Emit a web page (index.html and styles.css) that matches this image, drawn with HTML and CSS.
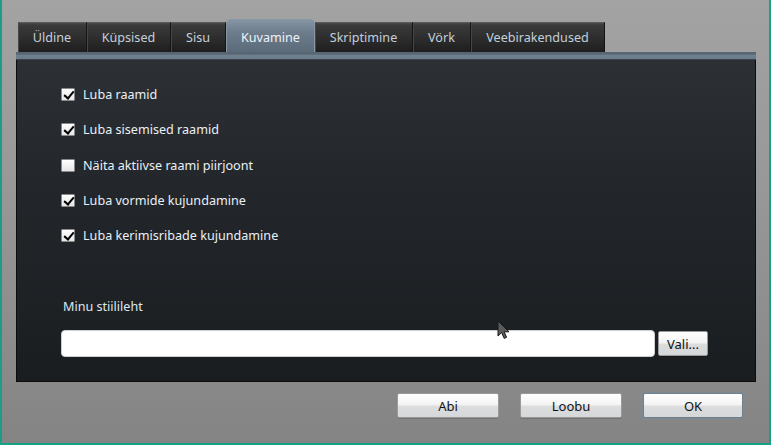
FILE: index.html
```html
<!DOCTYPE html>
<html lang="et">
<head>
<meta charset="utf-8">
<title>Kuvamine</title>
<link rel="stylesheet" href="styles.css">
</head>
<body>
<div class="window">
  <div class="tabs">
    <div class="tab">Üldine</div>
    <div class="tab">Küpsised</div>
    <div class="tab">Sisu</div>
    <div class="tab active">Kuvamine</div>
    <div class="tab">Skriptimine</div>
    <div class="tab">Vörk</div>
    <div class="tab last">Veebirakendused</div>
  </div>
  <div class="pane">
    <div class="pane-top"></div>
    <div class="pane-body">
      <div class="checks">
        <label class="row"><span class="box on"></span>Luba raamid</label>
        <label class="row"><span class="box on"></span>Luba sisemised raamid</label>
        <label class="row"><span class="box"></span>Näita aktiivse raami piirjoont</label>
        <label class="row"><span class="box on"></span>Luba vormide kujundamine</label>
        <label class="row"><span class="box on"></span>Luba kerimisribade kujundamine</label>
      </div>
      <div class="sheet-label">Minu stiilileht</div>
      <div class="sheet-row">
        <div class="field"></div>
        <div class="btn small">Vali...</div>
      </div>
    </div>
  </div>
  <div class="actions">
    <div class="btn">Abi</div>
    <div class="btn">Loobu</div>
    <div class="btn default">OK</div>
  </div>
  <svg class="cursor" width="14" height="20" viewBox="0 0 14 20">
    <path d="M1 1 L1 16 L4.6 12.6 L7.2 18.4 L9.6 17.3 L7.1 11.8 L12 11.8 Z" fill="#5a5a5a" stroke="#1a1a1a" stroke-width="1" stroke-linejoin="round"/>
  </svg>
</div>
</body>
</html>
```

FILE: styles.css
```css
* { box-sizing: border-box; }
html, body { margin: 0; padding: 0; }
body {
  width: 771px;
  height: 445px;
  overflow: hidden;
  font-family: "Noto Sans", "Open Sans", "DejaVu Sans", sans-serif;
  font-size: 12.6px;
}
.window {
  position: relative;
  width: 771px;
  height: 445px;
  border: 2px solid #16a085;
  border-top: none;
  background: linear-gradient(to bottom, #a3a3a3 0%, #979797 45%, #848484 100%);
  display: flex;
  flex-direction: column;
}
.tabs {
  display: flex;
  align-items: flex-end;
  height: 33px;
  margin-top: 19px;
  margin-left: 16px;
}
.tab {
  height: 30px;
  padding: 0;
  display: flex;
  align-items: center;
  justify-content: center;
  color: #c3d0dc;
  background: linear-gradient(to bottom, #4a4a4a 0%, #3a3a3a 8%, #2e2e2e 50%, #1e1e1e 100%);
  border-top: 1px solid #5a5a5a;
  border-right: 1px solid #141414;
  box-shadow: inset 1px 0 0 #474747;
}
.tab:nth-child(1) { width: 69px; }
.tab:nth-child(2) { width: 84px; }
.tab:nth-child(3) { width: 55px; }
.tab:nth-child(5) { width: 98px; }
.tab:nth-child(6) { width: 58px; }
.tab:nth-child(7) { width: 134px; }
.tab.active {
  width: 89px;
  height: 33px;
  padding-top: 3px;
  color: #eef3f8;
  border: 1px solid #8797a6;
  border-bottom: none;
  border-radius: 5px 5px 0 0;
  background: linear-gradient(to bottom, #8595a4 0%, #6c7c8b 40%, #5c6b79 100%);
  box-shadow: none;
}
.pane {
  margin-left: 14px;
  width: 740px;
  height: 330px;
  border: 1px solid #0c0c0c;
  border-top: none;
  display: flex;
  flex-direction: column;
  background: linear-gradient(to bottom, #2d3136 0%, #23272b 40%, #1a1d20 100%);
}
.pane-top {
  height: 8px;
  margin: 0 -1px;
  background: linear-gradient(to bottom, #56636f 0%, #5d6b78 35%, #6f808f 45%, #6a7b8a 100%);
  border-bottom: 1px solid #3b444c;
}
.pane-body {
  padding: 17px 0 0 44px;
  display: flex;
  flex-direction: column;
}
.checks {
  display: flex;
  flex-direction: column;
}
.row {
  height: 35.3px;
  display: flex;
  align-items: center;
  color: #eaf0f5;
  gap: 8px;
}
.box {
  width: 14px;
  height: 13px;
  background: linear-gradient(to bottom, #ffffff, #e6e6e6);
  border: 1px solid #8a8a8a;
  border-radius: 1px;
  position: relative;
}
.box.on::after {
  content: "";
  position: absolute;
  left: 3.5px;
  top: 0px;
  width: 4px;
  height: 8px;
  border-right: 2.5px solid #000;
  border-bottom: 2.5px solid #000;
  transform: rotate(40deg);
}
.sheet-label {
  margin-top: 45px;
  margin-left: 2px;
  color: #dde7f0;
  height: 18px;
  line-height: 18px;
}
.sheet-row {
  margin-top: 14px;
  display: flex;
  align-items: center;
  gap: 3px;
}
.field {
  width: 594px;
  height: 27px;
  background: #fff;
  border: 1px solid #cfcfcf;
  border-radius: 4px;
}
.btn {
  height: 25px;
  display: flex;
  align-items: center;
  justify-content: center;
  color: #111;
  font-size: 13px;
  background: linear-gradient(to bottom, #ffffff 0%, #f4f4f4 45%, #dcdcdc 55%, #d6d7d9 100%);
  border: 1px solid #9a9a9a;
  border-radius: 2px;
  box-shadow: 0 1px 0 rgba(0,0,0,0.15);
}
.btn.small { width: 50px; }
.actions {
  display: flex;
  justify-content: flex-end;
  gap: 21px;
  margin-top: 11px;
  margin-right: 26px;
}
.actions .btn { width: 102px; }
.actions .btn.default {
  width: 100px;
  border: 1px solid #6f7f8c;
  box-shadow: 0 0 0 1px #7c8a96;
}
.cursor {
  position: absolute;
  left: 495px;
  top: 320px;
}
```
